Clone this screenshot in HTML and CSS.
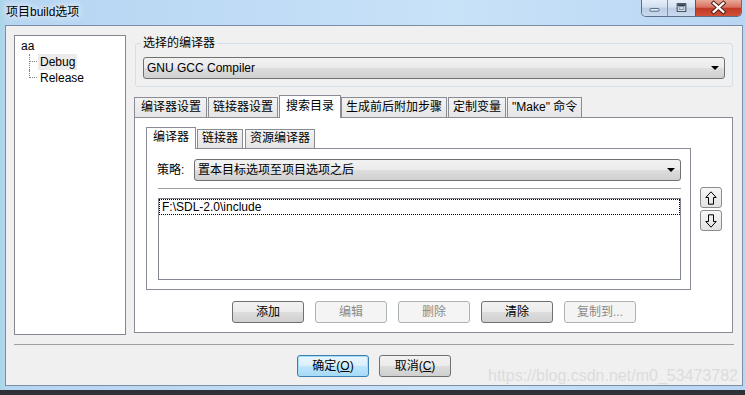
FILE: index.html
```html
<!DOCTYPE html>
<html lang="zh">
<head>
<meta charset="utf-8">
<title>项目build选项</title>
<link rel="stylesheet" href="styles.css">
</head>
<body>
<div class="window">
  <div class="titlebar">
    <span class="title">项目build选项</span>
    <div class="controls">
      <div class="ctl ctl-min">
        <svg width="27" height="16" viewBox="0 0 27 16"><rect x="8.5" y="8.5" width="10" height="3" rx="1" fill="#dbe6f2" stroke="#50647e"/></svg>
      </div>
      <div class="ctl ctl-max">
        <svg width="28" height="16" viewBox="0 0 28 16"><rect x="9.5" y="3.5" width="9" height="8" fill="#eef3f9" stroke="#2f3d50"/><rect x="10" y="4" width="8" height="2" fill="#2f3d50"/><rect x="11.5" y="6.5" width="5" height="3" fill="#cfdbe9" stroke="#7d8ea4"/></svg>
      </div>
      <div class="ctl ctl-close">
        <svg width="46" height="16" viewBox="0 0 46 16"><path d="M18 3 L28 12 M28 3 L18 12" stroke="#4a1a12" stroke-width="4.2" stroke-linecap="square"/><path d="M18 3 L28 12 M28 3 L18 12" stroke="#ffffff" stroke-width="2.2" stroke-linecap="square"/></svg>
      </div>
    </div>
  </div>

  <div class="client">
    <div class="main">
      <div class="tree">
        <div class="node">aa</div>
        <ul class="children">
          <li class="child"><span class="label sel">Debug</span></li>
          <li class="child last"><span class="label">Release</span></li>
        </ul>
      </div>

      <div class="right">
        <fieldset class="group">
          <legend>选择的编译器</legend>
          <div class="combo combo-compiler"><span>GNU GCC Compiler</span><i class="caret"></i></div>
        </fieldset>

        <div class="tabs">
          <div class="tab t1">编译器设置</div>
          <div class="tab">链接器设置</div>
          <div class="tab active">搜索目录</div>
          <div class="tab">生成前后附加步骤</div>
          <div class="tab">定制变量</div>
          <div class="tab">"Make" 命令</div>
        </div>

        <div class="panel">
          <div class="sub">
            <div class="subleft">
              <div class="subtabs">
                <div class="stab active">编译器</div>
                <div class="stab">链接器</div>
                <div class="stab">资源编译器</div>
              </div>
              <div class="subpanel">
                <div class="policy">
                  <span class="plabel">策略:</span>
                  <div class="combo combo-policy"><span>置本目标选项至项目选项之后</span><i class="caret"></i></div>
                </div>
                <div class="sep"></div>
                <div class="list">
                  <div class="item">F:\SDL-2.0\include</div>
                </div>
              </div>
            </div>
            <div class="arrows">
              <button class="abtn" type="button" aria-label="上移">
                <svg width="12" height="14" viewBox="0 0 12 14"><path d="M6 0.8 L11.2 6.5 L8.5 6.5 L8.5 13.2 L3.5 13.2 L3.5 6.5 L0.8 6.5 Z" fill="none" stroke="#000" stroke-width="1" stroke-linejoin="miter"/></svg>
              </button>
              <button class="abtn" type="button" aria-label="下移">
                <svg width="12" height="14" viewBox="0 0 12 14"><path d="M6 13.2 L11.2 7.5 L8.5 7.5 L8.5 0.8 L3.5 0.8 L3.5 7.5 L0.8 7.5 Z" fill="none" stroke="#000" stroke-width="1" stroke-linejoin="miter"/></svg>
              </button>
            </div>
          </div>
          <div class="actions">
            <button class="btn" type="button">添加</button>
            <button class="btn disabled" type="button">编辑</button>
            <button class="btn disabled" type="button">删除</button>
            <button class="btn" type="button">清除</button>
            <button class="btn disabled" type="button">复制到...</button>
          </div>
        </div>
      </div>
    </div>

    <div class="hsep"></div>

    <div class="footer">
      <button class="btn default" type="button">确定(<u>O</u>)</button>
      <button class="btn" type="button">取消(<u>C</u>)</button>
    </div>
  </div>

  <div class="watermark">https://blog.csdn.net/m0_53473782</div>
</div>
</body>
</html>
```

FILE: styles.css
```css
* { box-sizing: border-box; }

html, body {
  margin: 0;
  padding: 0;
}

body {
  width: 745px;
  height: 395px;
  overflow: hidden;
  background: #2e3136;
  font-family: "Liberation Sans", "Noto Sans CJK SC", sans-serif;
  font-size: 12px;
  color: #000;
}

.window {
  position: relative;
  width: 745px;
  height: 390px;
  display: flex;
  flex-direction: column;
  background: linear-gradient(to right, #a9d6e6 0px, #b6d5f1 6px, #c3def7 45%, #c9e2f8 60%, #b8d6f3 100%);
}

/* ---------- title bar ---------- */
.titlebar {
  height: 25px;
  display: flex;
  flex: none;
}

.title {
  padding-left: 6px;
  line-height: 24px;
  height: 24px;
  text-shadow: 0 0 6px rgba(255, 255, 255, 0.95), 0 0 10px rgba(255, 255, 255, 0.8);
}

.controls {
  margin-left: auto;
  margin-right: 3px;
  height: 17px;
  display: flex;
  border: 1px solid #5d6f87;
  border-top: none;
  border-radius: 0 0 5px 5px;
  overflow: hidden;
}

.ctl {
  height: 16px;
  display: flex;
}

.ctl-min {
  width: 26px;
  border-right: 1px solid #7f92ab;
  background: linear-gradient(#e6eef8 0%, #d3e0ef 45%, #bccee4 50%, #c9daee 100%);
}

.ctl-max {
  width: 28px;
  border-right: 1px solid #7a4a45;
  background: linear-gradient(#e6eef8 0%, #d3e0ef 45%, #bccee4 50%, #c9daee 100%);
}

.ctl-close {
  width: 45px;
  background: linear-gradient(#e9a898 0%, #d9715f 45%, #c23a25 52%, #d05036 100%);
}

/* ---------- client area ---------- */
.client {
  margin: 0 2px 0 5px;
  border: 1px solid #7b8ea6;
  background: #f0f0f0;
  padding: 9px 8px 8px 8px;
  flex: none;
}

.main {
  display: flex;
  gap: 8px;
  height: 300px;
}

/* tree */
.tree {
  width: 112px;
  height: 300px;
  border: 1px solid #828790;
  background: #fff;
  padding: 2px 6px;
}

.node {
  height: 16px;
  line-height: 16px;
}

.children {
  list-style: none;
  margin: 0 0 0 8px;
  padding: 0;
}

.child {
  position: relative;
  height: 16px;
  padding-left: 9px;
}

.child::before {
  content: "";
  position: absolute;
  left: 0;
  top: 7px;
  width: 8px;
  border-top: 1px dotted #808080;
}

.child::after {
  content: "";
  position: absolute;
  left: 0;
  top: 0;
  height: 16px;
  border-left: 1px dotted #808080;
}

.child.last::after {
  height: 8px;
}

.label {
  display: inline-block;
  height: 16px;
  line-height: 16px;
  padding: 0 2px;
}

.label.sel {
  background: #ebebeb;
}

/* right column */
.right {
  width: 599px;
  display: flex;
  flex-direction: column;
}

.group {
  margin: 1px 0 0 1px;
  padding: 7px 7px 7px 5px;
  border: 1px solid #d5dfe5;
  border-radius: 3px;
  min-width: 0;
}

.group legend {
  padding: 0 2px;
  line-height: 14px;
  height: 14px;
}

.combo {
  height: 22px;
  border: 1px solid #707070;
  border-radius: 3px;
  background: linear-gradient(#f2f2f2 0%, #ebebeb 48%, #dddddd 52%, #cfcfcf 100%);
  display: flex;
  align-items: center;
  padding: 0 5px 0 3px;
  line-height: 20px;
  white-space: nowrap;
}

.combo-compiler {
  margin-left: 2px;
}

.caret {
  margin-left: auto;
  width: 0;
  height: 0;
  border-left: 4px solid transparent;
  border-right: 4px solid transparent;
  border-top: 4px solid #000;
}

/* tabs */
.tabs {
  margin-top: 10px;
  height: 20px;
  display: flex;
  align-items: flex-end;
  position: relative;
  z-index: 1;
}

.tab {
  height: 20px;
  border: 1px solid #898c95;
  border-bottom: none;
  padding: 0 4px;
  margin-right: 1px;
  line-height: 18px;
  white-space: nowrap;
  background: linear-gradient(#f3f3f3, #e5e5e5);
}

.tab.t1 {
  padding: 0 5px 0 6px;
  margin-right: 1px;
}

.tab.active {
  height: 23px;
  margin: 0 0 -1px 0;
  padding: 0 6px;
  line-height: 20px;
  background: #fff;
}

.panel {
  border: 1px solid #898c95;
  background: #fff;
  padding: 9px 10px 9px 11px;
}

.sub {
  display: flex;
}

.subleft {
  width: 545px;
}

.subtabs {
  height: 21px;
  display: flex;
  align-items: flex-end;
  position: relative;
  z-index: 1;
}

.stab {
  height: 19px;
  border: 1px solid #898c95;
  border-bottom: none;
  padding: 0 4px;
  margin-right: 2px;
  line-height: 17px;
  white-space: nowrap;
  background: linear-gradient(#f3f3f3, #e5e5e5);
}

.stab.active {
  height: 22px;
  margin: 0 1px -1px 0;
  padding: 0 6px;
  line-height: 19px;
  background: #fff;
}

.subpanel {
  border: 1px solid #898c95;
  background: #fff;
  padding: 10px 9px 9px 10px;
}

.policy {
  display: flex;
  align-items: center;
}

.plabel {
  width: 37px;
  flex: none;
  line-height: 22px;
}

.combo-policy {
  flex: 1;
}

.sep {
  margin: 7px 0 0 1px;
  height: 1px;
  background: #a0a0a0;
}

.list {
  margin: 9px 0 0 1px;
  height: 82px;
  border: 1px solid #828790;
  background: #fff;
}

.item {
  height: 16px;
  border: 1px dotted #000;
  padding-left: 2px;
  line-height: 14px;
  white-space: nowrap;
}

.arrows {
  margin-left: 9px;
  padding-top: 60px;
  display: flex;
  flex-direction: column;
  gap: 2px;
}

.abtn {
  width: 22px;
  height: 21px;
  padding: 0;
  border: 1px solid #8c8c8c;
  border-radius: 3px;
  background: linear-gradient(#f6f6f6, #e3e3e3);
  display: flex;
  align-items: center;
  justify-content: center;
}

.actions {
  margin-top: 11px;
  display: flex;
  justify-content: center;
  gap: 11px;
}

.btn {
  width: 72px;
  height: 22px;
  padding: 0;
  border: 1px solid #707070;
  border-radius: 3px;
  background: linear-gradient(#f2f2f2 0%, #ebebeb 48%, #dddddd 52%, #cfcfcf 100%);
  font-family: inherit;
  font-size: 12px;
  color: #000;
  line-height: 20px;
}

.btn.disabled {
  border-color: #adb2b5;
  background: #f4f4f4;
  color: #8a8a8a;
}

.btn.default {
  border-color: #3c7fb1;
  background: linear-gradient(#eaf6fd 0%, #d9f0fc 48%, #bee6fd 52%, #a7d9f5 100%);
  box-shadow: inset 0 0 0 1px #a8dcf6;
}

.btn u {
  text-decoration: underline;
}

.hsep {
  margin-top: 9px;
  height: 1px;
  background: #a0a0a0;
}

.footer {
  margin-top: 10px;
  display: flex;
  justify-content: center;
  gap: 10px;
}

.watermark {
  position: absolute;
  left: 488px;
  top: 366px;
  font-family: "Liberation Sans", sans-serif;
  font-size: 16px;
  line-height: 20px;
  color: #dcdcdc;
  white-space: nowrap;
}
```
